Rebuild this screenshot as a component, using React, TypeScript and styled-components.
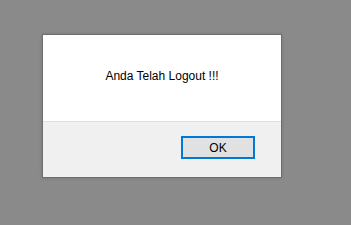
import { createGlobalStyle } from 'styled-components';
import styled from 'styled-components';

const GlobalStyle = createGlobalStyle`
  html, body {
    margin: 0;
    padding: 0;
    background: #8a8a8a;
  }
  * {
    box-sizing: border-box;
  }
`;

export default function App() {
  return (
    <>
      <GlobalStyle />
      <Screen>
        <Dialog role="alertdialog">
          <Message>Anda Telah Logout !!!</Message>
          <Footer>
            <OkButton autoFocus>OK</OkButton>
          </Footer>
        </Dialog>
      </Screen>
    </>
  );
}

const Screen = styled.div`
  width: 351px;
  height: 225px;
  padding: 34px 0 0 42px;
  background: #8a8a8a;
`;

const Dialog = styled.div`
  width: 240px;
  height: 144px;
  border: 1px solid #6e6e6e;
  background: #fff;
  display: flex;
  flex-direction: column;
  font-family: 'Liberation Sans', Arial, sans-serif;
  box-shadow: 0 0 3px rgba(0, 0, 0, 0.15);
`;

const Message = styled.div`
  height: 87px;
  display: flex;
  align-items: center;
  justify-content: center;
  font-size: 12px;
  color: #000;
  padding-bottom: 4px;
  border-bottom: 1px solid #dfdfdf;
`;

const Footer = styled.div`
  flex: 1;
  background: #f0f0f0;
  display: flex;
  justify-content: flex-end;
  align-items: flex-start;
  padding: 14px 26px 0 0;
`;

const OkButton = styled.button`
  width: 74px;
  height: 23px;
  border: 2px solid #0078d7;
  background: #e1e1e1;
  font-family: 'Liberation Sans', Arial, sans-serif;
  font-size: 12px;
  color: #000;
  padding: 0;
  outline: none;
`;
